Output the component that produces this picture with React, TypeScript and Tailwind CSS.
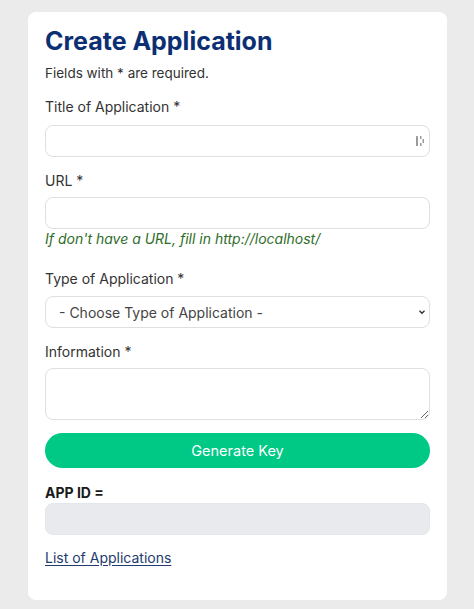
export default function App() {
  return (
    <div
      className="min-h-[609px] bg-[#ebebeb] pt-3 pb-3"
      style={{ fontFamily: "Inter, 'Noto Sans', sans-serif" }}
    >
      <div className="ml-[28px] w-[419px] rounded-lg bg-white px-[17px] pt-[14px] pb-[31px]">
        <h1 className="text-[25px] font-bold leading-[30px] text-[#0c2f74]">Create Application</h1>
        <p className="mt-[7px] text-[13.5px] leading-5 text-[#333]">Fields with * are required.</p>

        <label className="mt-[14px] block text-[14px] leading-5 text-[#333]">Title of Application *</label>
        <div className="relative mt-[8px]">
          <input className="block h-[32px] w-full rounded-lg border border-[#dfdfdf] bg-white px-3 text-sm outline-none" />
          <svg className="absolute right-[3px] top-1/2 -translate-y-1/2" width="12" height="14" viewBox="0 0 12 14" fill="#9a9a9a">
            <rect x="1" y="2" width="2" height="10" rx="0.5" />
            <rect x="5" y="2" width="1.5" height="3" />
            <rect x="5" y="9" width="1.5" height="3" />
            <rect x="7.5" y="5" width="1.5" height="4" />
          </svg>
        </div>

        <label className="mt-[14px] block text-[14px] leading-5 text-[#333]">URL *</label>
        <input className="mt-[6px] block h-[32px] w-full rounded-lg border border-[#dfdfdf] bg-white px-3 text-sm outline-none" />
        <p className="text-[14px] italic leading-5 text-[#2f6e2a]">If don't have a URL, fill in http://localhost/</p>

        <label className="mt-[20px] block text-[14px] leading-5 text-[#333]">Type of Application *</label>
        <div className="relative mt-[7px]">
          <select className="block h-[32px] w-full appearance-none rounded-lg border border-[#dfdfdf] bg-white pl-[13px] text-[14px] text-[#444] outline-none">
            <option>- Choose Type of Application -</option>
          </select>
          <svg className="pointer-events-none absolute right-[4px] top-1/2 -translate-y-1/2" width="8" height="8" viewBox="0 0 8 8" fill="none" stroke="#333" strokeWidth="1.4">
            <path d="M1.5 2.8 4 5.3 6.5 2.8" />
          </svg>
        </div>

        <label className="mt-[14px] block text-[14px] leading-5 text-[#333]">Information *</label>
        <textarea className="mt-[6px] block h-[52px] w-full rounded-lg border border-[#dfdfdf] bg-white px-3 text-sm outline-none" />

        <button className="mt-[13px] block h-[35px] w-full rounded-full bg-[#00c985] text-[14.5px] text-white">
          Generate Key
        </button>

        <p className="mt-[15px] text-[14px] font-bold leading-5 text-[#1a1a1a]">APP ID =</p>
        <input
          disabled
          className="block h-[32px] w-full rounded-lg border border-[#e3e6ea] bg-[#e8eaed] px-3 text-sm outline-none"
        />

        <a href="#" className="mt-[13px] inline-block text-[14px] leading-5 text-[#213b6e] underline underline-offset-2">
          List of Applications
        </a>
      </div>
    </div>
  );
}
